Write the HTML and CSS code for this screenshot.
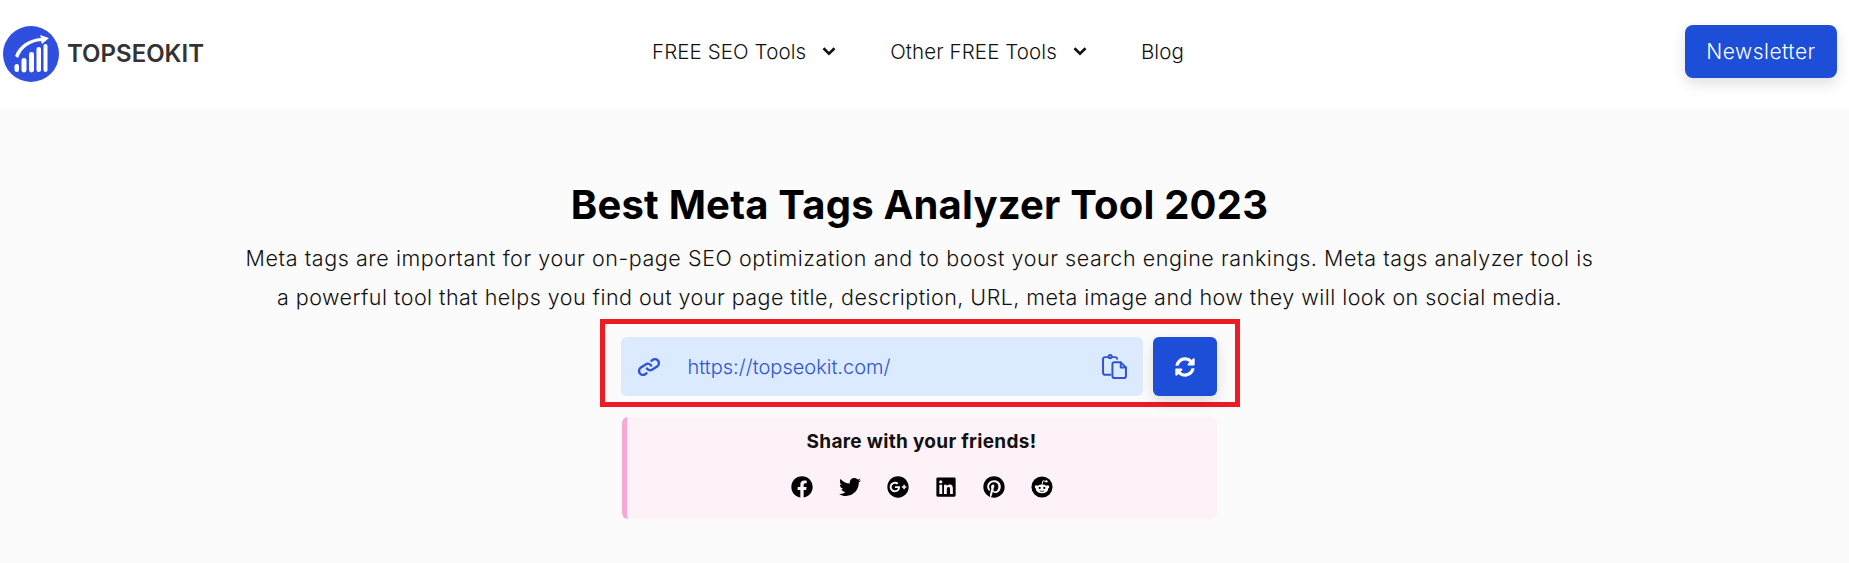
FILE: index.html
```html
<!DOCTYPE html>
<html lang="en">
<head>
    <meta charset="UTF-8">
    <meta name="viewport" content="width=device-width, initial-scale=1.0">
    <title>Best Meta Tags Analyzer Tool 2023 - TopSEOKit</title>
    <link rel="stylesheet" href="styles.css">
</head>
<body>

<header class="site-header">
    <a class="logo" href="#">
        <svg class="logo-mark" viewBox="0 0 56 56">
            <circle cx="28" cy="28" r="28" fill="#2f4fe0"/>
            <path d="M12 30C16 19 26 13 38 12l-1-3 9 3-7 6-1-3C28 16 19 21 15 32z" fill="#fff"/>
            <rect x="11.500" y="38" width="4.500" height="8" rx="2.200" fill="#fff"/>
            <rect x="18.500" y="32" width="5" height="14.500" rx="2.400" fill="#fff"/>
            <rect x="26" y="26" width="5" height="20.500" rx="2.400" fill="#fff"/>
            <rect x="33.500" y="21" width="4.500" height="25" rx="2.200" fill="#fff"/>
            <rect x="40.500" y="18" width="4" height="28" rx="2" fill="#fff"/>
        </svg>
        <span class="logo-text">TOPSEOKIT</span>
    </a>

    <nav class="main-nav">
        <a href="#" class="nav-link">FREE SEO Tools
            <svg class="chevron" viewBox="0 0 14 10"><path d="M2 2l5 5 5-5" fill="none" stroke="#111" stroke-width="2.400"/></svg>
        </a>
        <a href="#" class="nav-link">Other FREE Tools
            <svg class="chevron" viewBox="0 0 14 10"><path d="M2 2l5 5 5-5" fill="none" stroke="#111" stroke-width="2.400"/></svg>
        </a>
        <a href="#" class="nav-link">Blog</a>
    </nav>

    <button class="btn-newsletter">Newsletter</button>
</header>

<main class="content">
    <h1>Best Meta Tags Analyzer Tool 2023</h1>
    <p class="intro">Meta tags are important for your on-page SEO optimization and to boost your search engine rankings. Meta tags analyzer tool is<br><span class="intro-second">a powerful tool that helps you find out your page title, description, URL, meta image and how they will look on social media.</span></p>

    <div class="url-box">
        <div class="url-field">
            <svg class="link-icon" viewBox="0 0 24 24" fill="none" stroke="#2f55d4" stroke-width="2.400" stroke-linecap="round" stroke-linejoin="round"><path d="M13.828 10.172a4 4 0 00-5.656 0l-4 4a4 4 0 105.656 5.656l1.102-1.101m-.758-4.899a4 4 0 005.656 0l4-4a4 4 0 00-5.656-5.656l-1.100 1.100"/></svg>
            <span class="url-text">https://topseokit.com/</span>
            <svg class="paste-icon" viewBox="0 0 24 24" fill="none" stroke="#2f55d4" stroke-width="1.900" stroke-linejoin="round" stroke-linecap="round">
                <path d="M8 20H3a2 2 0 01-2-2V5a2 2 0 012-2h2.500M10 3h2.500a2 2 0 012 1.500"/>
                <circle cx="7.800" cy="2.500" r="1.500"/>
                <path d="M10 10a2 2 0 012-2h6l5 5v8a2 2 0 01-2 2h-9a2 2 0 01-2-2z"/>
                <path d="M18 8v5h5"/>
            </svg>
        </div>
        <button class="btn-refresh">
            <svg viewBox="0 0 512 512" class="refresh-icon"><path fill="#fff" d="M370.72 133.28C339.458 104.008 298.888 87.962 255.848 88c-77.458.068-144.328 53.178-162.791 126.85-1.344 5.363-6.122 9.15-11.651 9.15H24.103c-7.498 0-13.194-6.807-11.807-14.176C33.933 94.924 134.813 8 256 8c66.448 0 126.791 26.136 171.315 68.685L463.03 40.97C478.149 25.851 504 36.559 504 57.941V192c0 13.255-10.745 24-24 24H345.941c-21.382 0-32.09-25.851-16.971-40.971l41.75-41.749zM32 296h134.059c21.382 0 32.09 25.851 16.971 40.971l-41.75 41.75c31.262 29.273 71.835 45.319 114.876 45.28 77.418-.07 144.315-53.144 162.787-126.849 1.344-5.363 6.122-9.15 11.651-9.15h57.304c7.498 0 13.194 6.807 11.807 14.176C478.067 417.076 377.187 504 256 504c-66.448 0-126.791-26.136-171.315-68.685L48.97 471.03C33.851 486.149 8 475.441 8 454.059V320c0-13.255 10.745-24 24-24z"/></svg>
        </button>
    </div>

    <div class="share-card">
        <p class="share-title">Share with your friends!</p>
        <div class="share-icons">
            <svg class="share-icon" viewBox="0 0 512 512"><path d="M504 256C504 119 393 8 256 8S8 119 8 256c0 123.780 90.690 226.380 209.250 245V327.690h-63V256h63v-54.640c0-62.150 37-96.480 93.670-96.480 27.140 0 55.520 4.840 55.520 4.840v61h-31.280c-30.800 0-40.410 19.120-40.410 38.730V256h68.780l-11 71.690h-57.780V501C413.310 482.380 504 379.780 504 256z"/></svg>
            <svg class="share-icon" viewBox="0 0 512 512"><path d="M459.370 151.716c.325 4.548.325 9.097.325 13.645 0 138.720-105.583 298.558-298.558 298.558-59.452 0-114.680-17.219-161.137-47.106 8.447.974 16.568 1.299 25.340 1.299 49.055 0 94.213-16.568 130.274-44.832-46.132-.975-84.792-31.188-98.112-72.772 6.498.974 12.995 1.624 19.818 1.624 9.421 0 18.843-1.300 27.614-3.573-48.081-9.747-84.143-51.980-84.143-102.985v-1.299c13.969 7.797 30.214 12.670 47.431 13.319-28.264-18.843-46.781-51.005-46.781-87.391 0-19.492 5.197-37.360 14.294-52.954 51.655 63.675 129.300 105.258 216.365 109.807-1.624-7.797-2.599-15.918-2.599-24.040 0-57.828 46.782-104.934 104.934-104.934 30.213 0 57.502 12.670 76.670 33.137 23.715-4.548 46.456-13.320 66.599-25.340-7.798 24.366-24.366 44.833-46.132 57.827 21.117-2.273 41.584-8.122 60.426-16.243-14.292 20.791-32.161 39.308-52.628 54.253z"/></svg>
            <svg class="share-icon" viewBox="0 0 512 512"><path d="M256 8C119.100 8 8 119.100 8 256s111.100 248 248 248 248-111.100 248-248S392.900 8 256 8zM185.300 380a124 124 0 010-248c31.300 0 60.100 11 83 32.300l-33.600 32.600c-13.200-12.900-31.300-19.100-49.400-19.100-42.900 0-77.200 35.500-77.200 78.100S142.300 334 185.300 334c32.600 0 64.900-19.100 70.100-53.300h-70.100v-42.600h116.900a109.200 109.200 0 011.900 20.700c0 70.800-47.500 121.200-118.800 121.200zM415.500 273.800v35.500H380v-35.500h-35.500v-35.500H380v-35.500h35.500v35.500h35.200v35.500z"/></svg>
            <svg class="share-icon" viewBox="0 0 448 512"><path d="M416 32H31.900C14.300 32 0 46.500 0 64.300v383.400C0 465.500 14.300 480 31.900 480H416c17.600 0 32-14.500 32-32.300V64.300c0-17.800-14.400-32.300-32-32.300zM135.400 416H69V202.200h66.500V416zm-33.200-243c-21.300 0-38.500-17.300-38.500-38.500S80.900 96 102.200 96c21.200 0 38.500 17.300 38.500 38.500 0 21.300-17.200 38.500-38.500 38.500zm282.100 243h-66.400V312c0-24.800-.5-56.700-34.500-56.700-34.600 0-39.900 27-39.900 54.900V416h-66.400V202.200h63.700v29.200h.9c8.900-16.800 30.600-34.500 62.900-34.500 67.200 0 79.700 44.300 79.700 101.900V416z"/></svg>
            <svg class="share-icon" viewBox="0 0 496 512"><path d="M496 256c0 137-111 248-248 248-25.600 0-50.200-3.900-73.400-11.100 10.100-16.500 25.200-43.500 30.800-65 3-11.600 15.400-59 15.400-59 8.100 15.400 31.700 28.500 56.800 28.500 74.800 0 128.700-68.800 128.700-154.300 0-81.900-66.900-143.200-152.900-143.200-107 0-163.900 71.800-163.900 150.100 0 36.400 19.400 81.700 50.300 96.100 4.700 2.200 7.200 1.200 8.300-3.300.8-3.400 5-20.300 6.900-28.100.6-2.500.3-4.700-1.700-7.100-10.100-12.500-18.300-35.300-18.300-56.600 0-54.700 41.400-107.600 112-107.600 60.900 0 103.600 41.500 103.600 100.900 0 67.100-33.900 113.600-78 113.600-24.300 0-42.600-20.100-36.700-44.800 7-29.500 20.500-61.300 20.500-82.600 0-19-10.200-34.900-31.400-34.900-24.900 0-44.900 25.700-44.900 60.200 0 22 7.400 36.800 7.400 36.800s-24.500 103.800-29 123.200c-5 21.400-3 51.600-.9 71.200C65.400 450.900 0 361.100 0 256 0 119 111 8 248 8s248 111 248 248z"/></svg>
            <svg class="share-icon" viewBox="0 0 24 24">
                <circle cx="12" cy="12" r="11.500"/>
                <circle cx="5.800" cy="11.800" r="1.700" fill="#fff"/>
                <circle cx="18.200" cy="11.800" r="1.700" fill="#fff"/>
                <ellipse cx="12" cy="14" rx="6.800" ry="4.800" fill="#fff"/>
                <path d="M12 9.500l1-4.300 3 .7" fill="none" stroke="#fff" stroke-width="1"/>
                <circle cx="16.800" cy="5.800" r="1.300" fill="#fff"/>
                <circle cx="9.500" cy="13" r="1.200"/>
                <circle cx="14.500" cy="13" r="1.200"/>
                <path d="M9.500 16c1.500 1 3.500 1 5 0" fill="none" stroke="#000" stroke-width=".8"/>
            </svg>
        </div>
    </div>
</main>

</body>
</html>
```

FILE: styles.css
```css
* {
    margin: 0;
    padding: 0;
    box-sizing: border-box;
}

body {
    font-family: Inter, "Open Sans", sans-serif;
    background-color: #fbfbfb;
    color: #111;
    overflow: hidden;
}

a {
    text-decoration: none;
    color: inherit;
}

.site-header {
    display: flex;
    align-items: center;
    height: 108px;
    padding: 0 12px 0 3px;
    background-color: #fff;
}

.logo {
    display: flex;
    align-items: center;
    gap: 8px;
    width: 200px;
    margin-bottom: 1px;
}

.logo-mark {
    width: 56px;
    height: 56px;
    flex-shrink: 0;
}

.logo-text {
    font-size: 24px;
    font-weight: 600;
    color: #333;
}

.main-nav {
    display: flex;
    align-items: center;
    gap: 53px;
    margin-left: 449px;
    margin-bottom: 5px;
}

.nav-link {
    display: flex;
    align-items: center;
    gap: 15px;
    font-size: 20.5px;
    font-weight: 300;
    letter-spacing: 0.1px;
    color: #111;
}

.chevron {
    width: 16px;
    height: 11px;
}

.btn-newsletter {
    margin-left: auto;
    margin-bottom: 5px;
    width: 152px;
    height: 53px;
    border: none;
    border-radius: 8px;
    background-color: #1d4ed8;
    color: #fff;
    font-family: inherit;
    font-size: 21px;
    font-weight: 300;
    letter-spacing: 0.5px;
    box-shadow: 0 6px 14px rgba(0, 0, 0, 0.12);
}

.content {
    display: flex;
    flex-direction: column;
    align-items: center;
    padding-top: 74px;
    padding-right: 10px;
}

.content h1 {
    font-size: 40px;
    font-weight: 700;
    line-height: 46px;
    letter-spacing: 0.2px;
    color: #000;
}

.intro {
    margin-top: 11px;
    font-size: 21.5px;
    font-weight: 300;
    letter-spacing: 0.57px;
    line-height: 39px;
    text-align: center;
}

.intro-second {
    letter-spacing: 0.46px;
}

.url-box {
    display: flex;
    gap: 10px;
    width: 640px;
    height: 88px;
    margin-top: 2px;
    padding: 13px 18px 6px 16px;
    border: 5px solid #ed1c24;
}

.url-field {
    flex: 1;
    display: flex;
    align-items: center;
    padding: 0 16px;
    border-radius: 6px;
    background-color: #dbeafe;
}

.link-icon {
    width: 24px;
    height: 24px;
    transform: rotate(12deg);
}

.url-text {
    margin-left: 27px;
    font-size: 20px;
    font-weight: 300;
    color: #2f55d4;
}

.paste-icon {
    width: 25px;
    height: 25px;
    margin-left: auto;
}

.btn-refresh {
    display: flex;
    align-items: center;
    justify-content: center;
    width: 64px;
    border: none;
    border-radius: 6px;
    background-color: #1d4ed8;
    box-shadow: 0 6px 14px rgba(0, 0, 0, 0.12);
}

.refresh-icon {
    width: 20px;
    height: 20px;
}

.share-card {
    width: 595px;
    height: 102px;
    margin-top: 10px;
    margin-right: 1px;
    padding-top: 12px;
    border-left: 5px solid #f9a8d4;
    border-radius: 6px;
    background-color: #fdf2f8;
    text-align: center;
}

.share-title {
    font-size: 19px;
    font-weight: 700;
    letter-spacing: 0.3px;
    line-height: 26px;
}

.share-icons {
    display: flex;
    justify-content: center;
    align-items: center;
    gap: 26px;
    margin-top: 21px;
}

.share-icon {
    width: 22px;
    height: 22px;
    fill: #000;
}
```
